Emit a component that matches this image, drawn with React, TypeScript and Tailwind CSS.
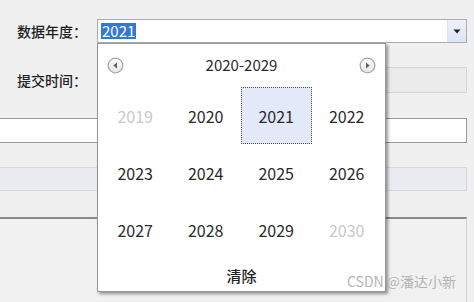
import React from 'react';

const YEARS = [
  { y: 2019, muted: true },
  { y: 2020 },
  { y: 2021, selected: true },
  { y: 2022 },
  { y: 2023 },
  { y: 2024 },
  { y: 2025 },
  { y: 2026 },
  { y: 2027 },
  { y: 2028 },
  { y: 2029 },
  { y: 2030, muted: true },
];

function RoundArrow({ dir }: { dir: 'left' | 'right' }) {
  return (
    <svg width="17" height="17" viewBox="0 0 17 17">
      <defs>
        <linearGradient id={`g-${dir}`} x1="0" y1="0" x2="0" y2="1">
          <stop offset="0" stopColor="#ffffff" />
          <stop offset="1" stopColor="#e6e6e6" />
        </linearGradient>
      </defs>
      <circle cx="8.5" cy="8.5" r="7.3" fill={`url(#g-${dir})`} stroke="#a9a9a9" strokeWidth="1.3" />
      {dir === 'left' ? (
        <path d="M10 5.5 L6.3 8.5 L10 11.5 Z" fill="#606060" />
      ) : (
        <path d="M7 5.5 L10.7 8.5 L7 11.5 Z" fill="#606060" />
      )}
    </svg>
  );
}

export default function App() {
  return (
    <div
      className="relative w-[474px] h-[302px] overflow-hidden bg-[#f0f0f0] flex flex-col text-[#333]"
      style={{ fontFamily: '"Noto Sans CJK SC", "Noto Sans", sans-serif' }}
    >
      {/* 数据年度 */}
      <div className="mt-[19px] h-[24px] flex items-center">
        <span className="w-[97px] pl-[17px] text-[14px] font-medium text-[#1e1e1e]">数据年度：</span>
        <div className="w-[370px] h-full flex border border-[#abadb3] bg-white">
          <div className="flex-1 flex items-center pl-[3px]">
            <span className="bg-[#3478d6] text-white text-[15px] leading-[16px] px-px">2021</span>
          </div>
          <div className="w-[19px] h-full flex items-center justify-center bg-gradient-to-b from-[#eef1fa] to-[#dde4f4] border-l border-[#e0e4ee]">
            <svg width="8" height="5" viewBox="0 0 8 5">
              <path d="M0.5 0.5 L7.5 0.5 L4 4.5 Z" fill="#1e2430" />
            </svg>
          </div>
        </div>
      </div>

      {/* 提交时间 */}
      <div className="mt-[24px] h-[26px] flex items-center">
        <span className="w-[97px] pl-[17px] text-[14px] font-medium text-[#1e1e1e]">提交时间：</span>
        <div className="w-[370px] h-full border border-[#d6d6d6] bg-[#ebebeb]" />
      </div>

      <div className="mt-[25px] h-[25px] w-[467px] bg-white border border-l-0 border-[#9a9a9a]" />
      <div className="mt-[24px] h-[24px] w-[467px] bg-[#eaecf2] border border-l-0 border-[#d4d7de]" />
      <div className="mt-[26px] flex-1 w-[467px] border-t-2 border-r border-t-[#8a8a8a] border-r-[#d2d2d2] bg-[#f1f1f1]" />

      {/* year popup */}
      <div className="absolute left-[97px] top-[43px] w-[289px] h-[249px] bg-white border border-[#979797] shadow-[2px_2px_3px_rgba(0,0,0,0.4)] flex flex-col">
        <div className="h-[43px] flex items-center justify-between px-[9px]">
          <RoundArrow dir="left" />
          <span className="text-[15px] text-[#2a2a2a]">2020-2029</span>
          <RoundArrow dir="right" />
        </div>
        <div className="h-[172px] pl-[2px] pr-[3px] grid grid-cols-4 grid-rows-3">
          {YEARS.map((item) => (
            <div
              key={item.y}
              className={
                item.selected
                  ? 'flex items-center justify-center text-[16px] bg-[#e4e9fa] border border-dotted border-[#4a4a4a] text-[#2a2a2a]'
                  : item.muted
                  ? 'flex items-center justify-center text-[16px] text-[#c9c9c9]'
                  : 'flex items-center justify-center text-[16px] text-[#2a2a2a]'
              }
            >
              {item.y}
            </div>
          ))}
        </div>
        <div className="flex-1 flex items-center justify-center pt-[2px] text-[15px] font-medium text-[#222]">清除</div>
      </div>

      <span className="absolute left-[347px] top-[271px] text-[14px] text-[#b4b4b4] whitespace-nowrap">
        CSDN @潘达小新
      </span>
    </div>
  );
}
